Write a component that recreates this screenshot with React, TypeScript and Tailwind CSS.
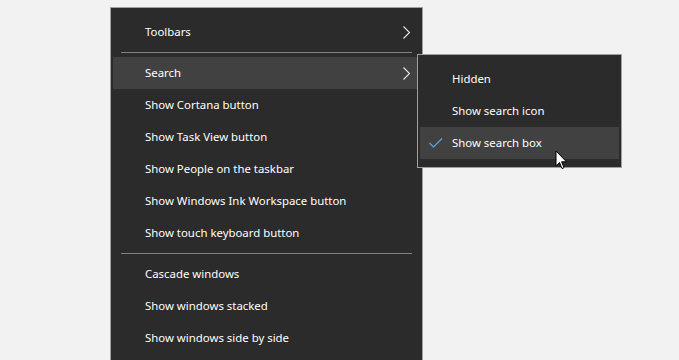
import React from "react";

const Chevron = () => (
  <svg width="9" height="13" viewBox="0 0 9 13" className="block">
    <path d="M1.5 0.5 L7.5 6.5 L1.5 12.5" fill="none" stroke="#e6e6e6" strokeWidth="1.1" />
  </svg>
);

const Row = ({ label, hover, chevron }: { label: string; hover?: boolean; chevron?: boolean }) => (
  <div className={`mx-[2px] h-[32px] flex items-center pl-[32px] pr-[9px] ${hover ? "bg-[#414141]" : ""}`}>
    <span className="flex-1 text-white text-[11.4px] leading-none">{label}</span>
    {chevron && <Chevron />}
  </div>
);

const Sep = () => <div className="mx-[10px] my-[4px] h-px bg-[#808080]" />;

export default function App() {
  return (
    <div
      className="relative w-[679px] h-[360px] overflow-hidden bg-[#f2f2f2]"
      style={{ fontFamily: '"Noto Sans", "Open Sans", sans-serif' }}
    >
      <div className="absolute left-[110px] top-[7px] w-[313px] h-[400px] bg-[#2b2b2b] border border-[#a0a0a0] pt-[8px]">
        <Row label="Toolbars" chevron />
        <Sep />
        <Row label="Search" chevron hover />
        <Row label="Show Cortana button" />
        <Row label="Show Task View button" />
        <Row label="Show People on the taskbar" />
        <Row label="Show Windows Ink Workspace button" />
        <Row label="Show touch keyboard button" />
        <Sep />
        <Row label="Cascade windows" />
        <Row label="Show windows stacked" />
        <Row label="Show windows side by side" />
      </div>

      <div className="absolute left-[417px] top-[54px] w-[205px] bg-[#2b2b2b] border border-[#a0a0a0] py-[8px]">
        <div className="mx-[2px] h-[32px] flex items-center pl-[32px]">
          <span className="text-white text-[11.4px] leading-none">Hidden</span>
        </div>
        <div className="mx-[2px] h-[32px] flex items-center pl-[32px]">
          <span className="text-white text-[11.4px] leading-none">Show search icon</span>
        </div>
        <div className="relative ml-[2px] mr-[2px] h-[32px] flex items-center pl-[32px] bg-[#414141]">
          <svg width="14" height="10" viewBox="0 0 14 10" className="absolute left-[9px] top-[11px]">
            <path d="M0.5 5 L4.5 9 L13 0.5" fill="none" stroke="#5aa7e6" strokeWidth="1.2" />
          </svg>
          <span className="text-white text-[11.4px] leading-none">Show search box</span>
        </div>
      </div>

      <svg width="14" height="21" viewBox="0 0 14 21" className="absolute left-[555px] top-[150px]">
        <path
          d="M1 1 L1 16 L4.5 12.5 L7 18.5 L9 17.7 L6.6 11.8 L11.5 11.8 Z"
          fill="#ffffff"
          stroke="#000000"
          strokeWidth="1"
          strokeLinejoin="miter"
        />
      </svg>
    </div>
  );
}
